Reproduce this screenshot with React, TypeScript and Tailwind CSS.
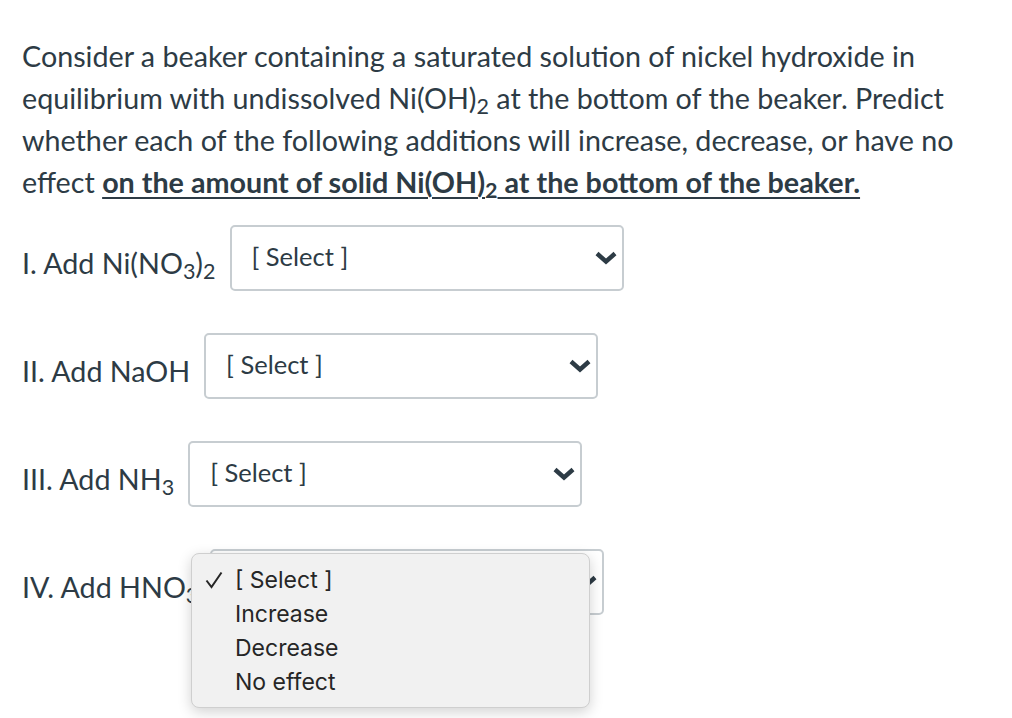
import React from "react";

const Chevron = () => (
  <svg width="24" height="14" viewBox="0 0 24 14" className="shrink-0">
    <polyline points="3,2.5 12,10.5 21,2.5" fill="none" stroke="#2d3b45" strokeWidth="4.4" strokeLinecap="butt" strokeLinejoin="miter" />
  </svg>
);

const SelectBox = () => (
  <div className="flex h-[66px] w-[394px] shrink-0 items-center justify-between rounded-[5px] border-2 border-[#c7cdd1] bg-white pl-[20px] pr-[4px]">
    <span className="-mt-[2px] text-[25.5px] leading-none text-[#2d3b45]">[ Select ]</span>
    <Chevron />
  </div>
);

export default function App() {
  return (
    <div className="min-h-[718px] w-[1012px] overflow-hidden bg-white pl-[22px] pt-[35px] text-[#2d3b45]" style={{ fontFamily: "Lato, 'Noto Sans', sans-serif" }}>
      <p className="text-[28.7px] leading-[42px] whitespace-nowrap">
        Consider a beaker containing a saturated solution of nickel hydroxide in
        <br />
        equilibrium with undissolved Ni(OH)<sub>2</sub> at the bottom of the beaker. Predict
        <br />
        whether each of the following additions will increase, decrease, or have no
        <br />
        effect{" "}
        <strong className="font-bold underline decoration-[2px] underline-offset-[4px]">
          on the amount of solid Ni(OH)<sub>2</sub> at the bottom of the beaker.
        </strong>
      </p>

      <div className="mt-[22px] flex flex-col gap-[42px]">
        <div className="flex items-center gap-[14px]">
          <span className="pt-[10px] text-[28.7px] leading-none whitespace-nowrap">
            I. Add Ni(NO<sub>3</sub>)<sub>2</sub>
          </span>
          <SelectBox />
        </div>
        <div className="flex items-center gap-[14px]">
          <span className="pt-[10px] text-[28.7px] leading-none whitespace-nowrap">II. Add NaOH</span>
          <SelectBox />
        </div>
        <div className="flex items-center gap-[14px]">
          <span className="pt-[10px] text-[28.7px] leading-none whitespace-nowrap">
            III. Add NH<sub>3</sub>
          </span>
          <SelectBox />
        </div>
        <div className="relative flex items-center gap-[12px]">
          <span className="pt-[10px] text-[28.7px] leading-none whitespace-nowrap">
            IV. Add HNO<sub>3</sub>
          </span>
          <SelectBox />
          <div
            className="absolute left-[169px] top-[4px] w-[399px] rounded-[8px] border border-[#cfcfcf] bg-[#f1f1f1] pt-[9px] pb-[8px] shadow-[0_4px_14px_rgba(0,0,0,0.18)]"
            style={{ fontFamily: "Inter, 'Noto Sans', sans-serif" }}
          >
            {["[ Select ]", "Increase", "Decrease", "No effect"].map((t, i) => (
              <div key={t} className="flex h-[34px] items-center text-[23px] text-[#262626]">
                <span className="flex w-[43px] shrink-0 justify-start pl-[13px]">
                  {i === 0 ? (
                    <svg width="18" height="18" viewBox="0 0 18 18">
                      <polyline points="1.5,9.5 6.5,16 16.5,1.5" fill="none" stroke="#262626" strokeWidth="2" />
                    </svg>
                  ) : null}
                </span>
                <span>{t}</span>
              </div>
            ))}
          </div>
        </div>
      </div>
    </div>
  );
}
